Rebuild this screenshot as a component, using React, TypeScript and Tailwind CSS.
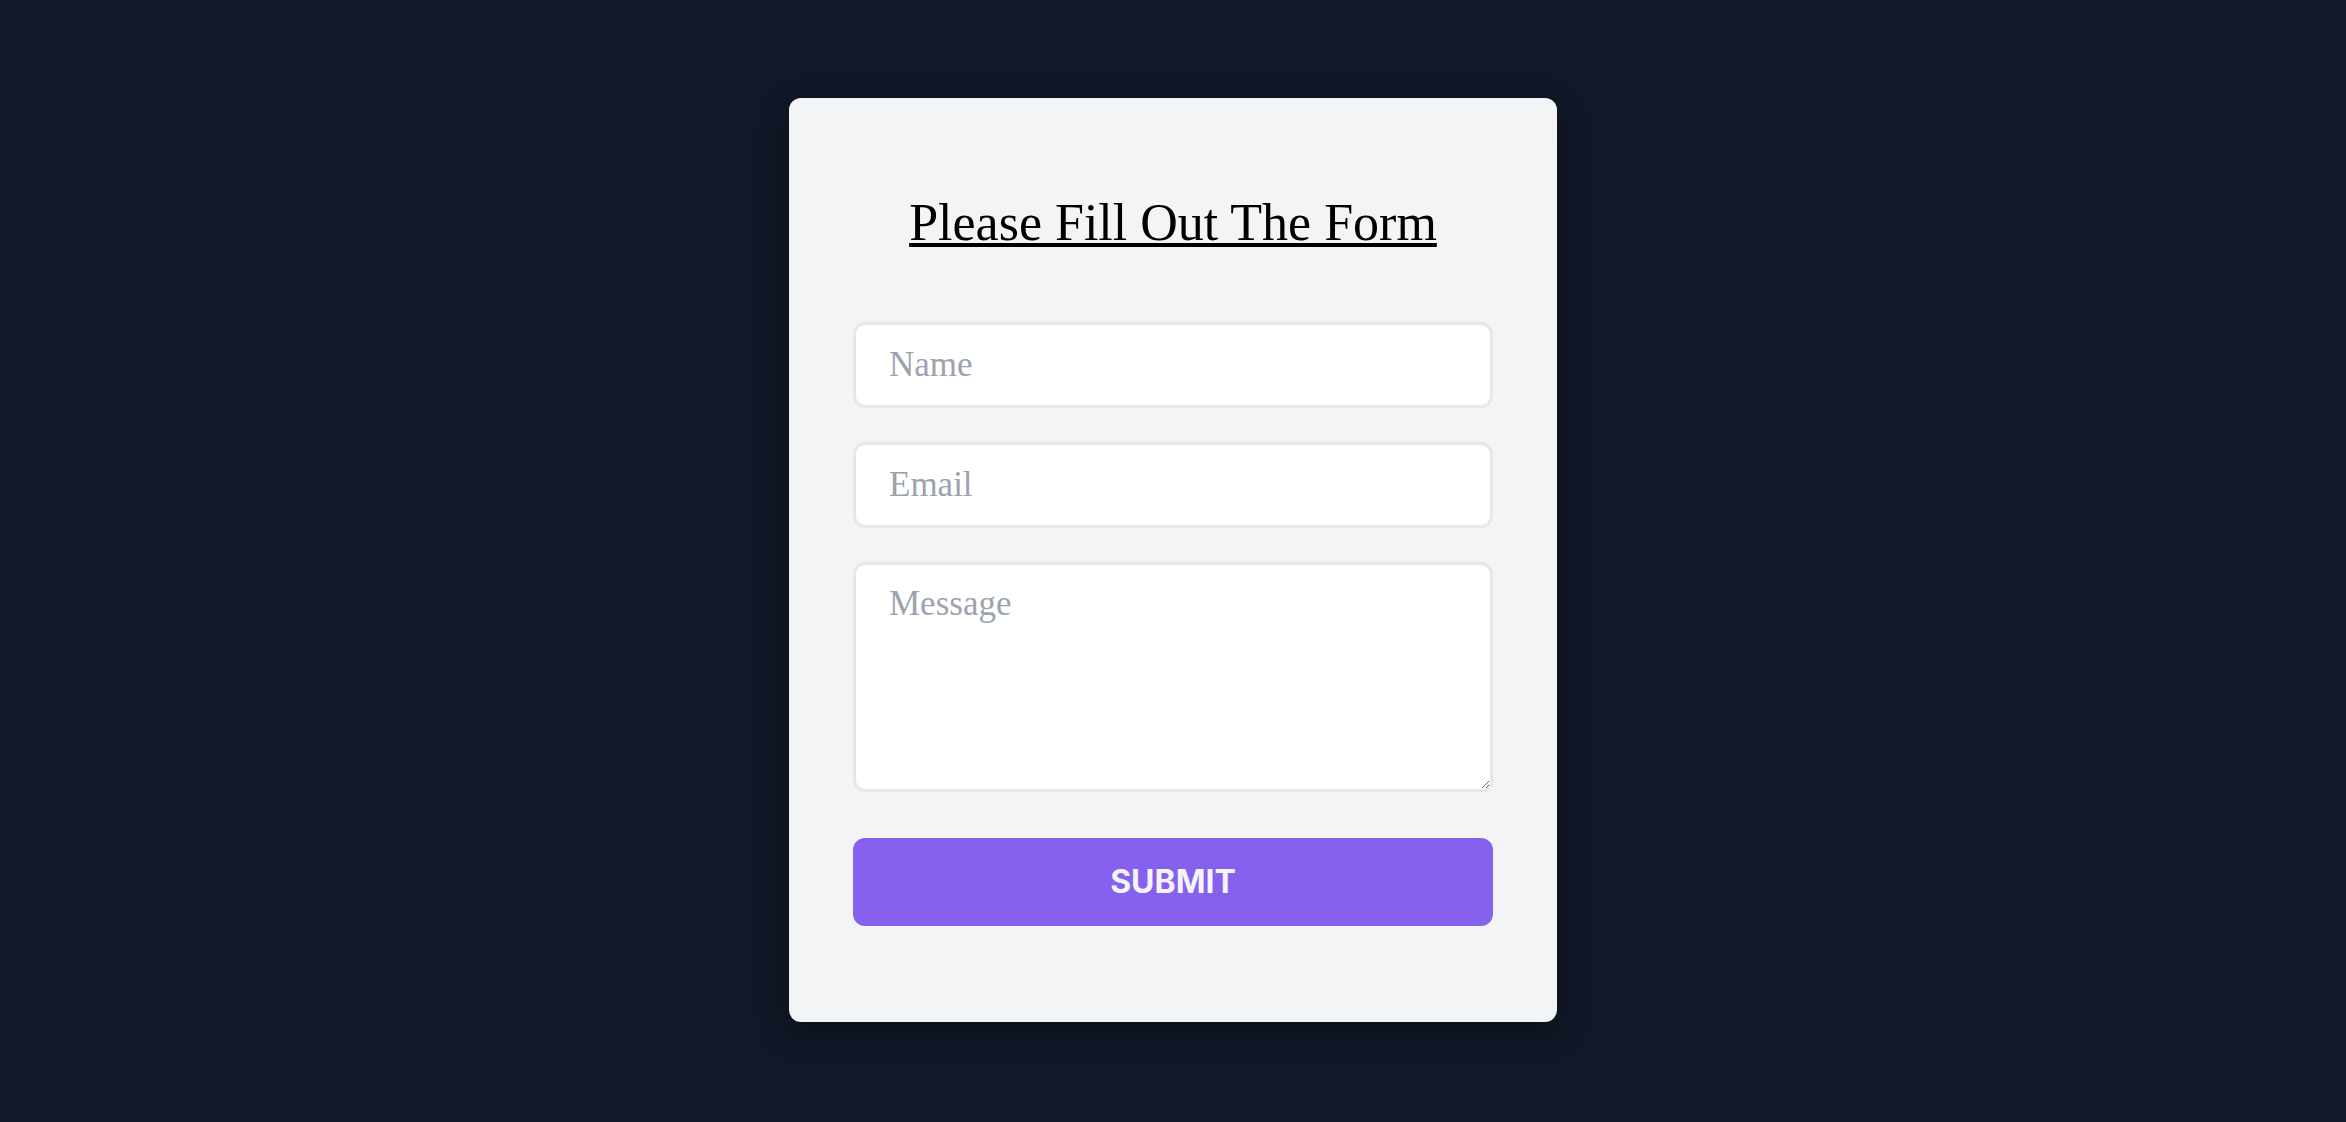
export default function App() {
  return (
    <div className="flex h-screen w-full items-center justify-center bg-[#111827]">
      <form
        className="-mt-[2px] flex w-[768px] flex-col rounded-xl bg-[#f3f4f6] px-16 pt-[95px] pb-[96px] shadow-[0_10px_30px_rgba(0,0,0,0.35)]"
        onSubmit={(e) => e.preventDefault()}
      >
        <h1 className="text-center font-['Liberation_Serif',serif] text-[52px] leading-[60px] text-black underline decoration-[4px] underline-offset-[3px]">
          Please Fill Out The Form
        </h1>

        <div className="mt-[69px] flex flex-col gap-[34px]">
          <input
            type="text"
            placeholder="Name"
            className="h-[86px] w-full rounded-xl border-[3px] border-[#e5e7eb] bg-white px-[33px] font-['Liberation_Serif',serif] text-[35px] text-gray-800 outline-none placeholder:text-[#9ca3af]"
          />
          <input
            type="email"
            placeholder="Email"
            className="h-[86px] w-full rounded-xl border-[3px] border-[#e5e7eb] bg-white px-[33px] font-['Liberation_Serif',serif] text-[35px] text-gray-800 outline-none placeholder:text-[#9ca3af]"
          />
          <textarea
            placeholder="Message"
            className="h-[230px] w-full rounded-xl border-[3px] border-[#e5e7eb] bg-white px-[33px] pt-[13px] font-['Liberation_Serif',serif] text-[35px] leading-[52px] text-gray-800 outline-none placeholder:text-[#9ca3af]"
          />
        </div>

        <button
          type="submit"
          className="mt-[46px] h-[88px] w-full rounded-xl bg-[#8661ee] font-['Inter',sans-serif] text-[32px] font-bold text-[#f3f4f6]"
        >
          SUBMIT
        </button>
      </form>
    </div>
  );
}
